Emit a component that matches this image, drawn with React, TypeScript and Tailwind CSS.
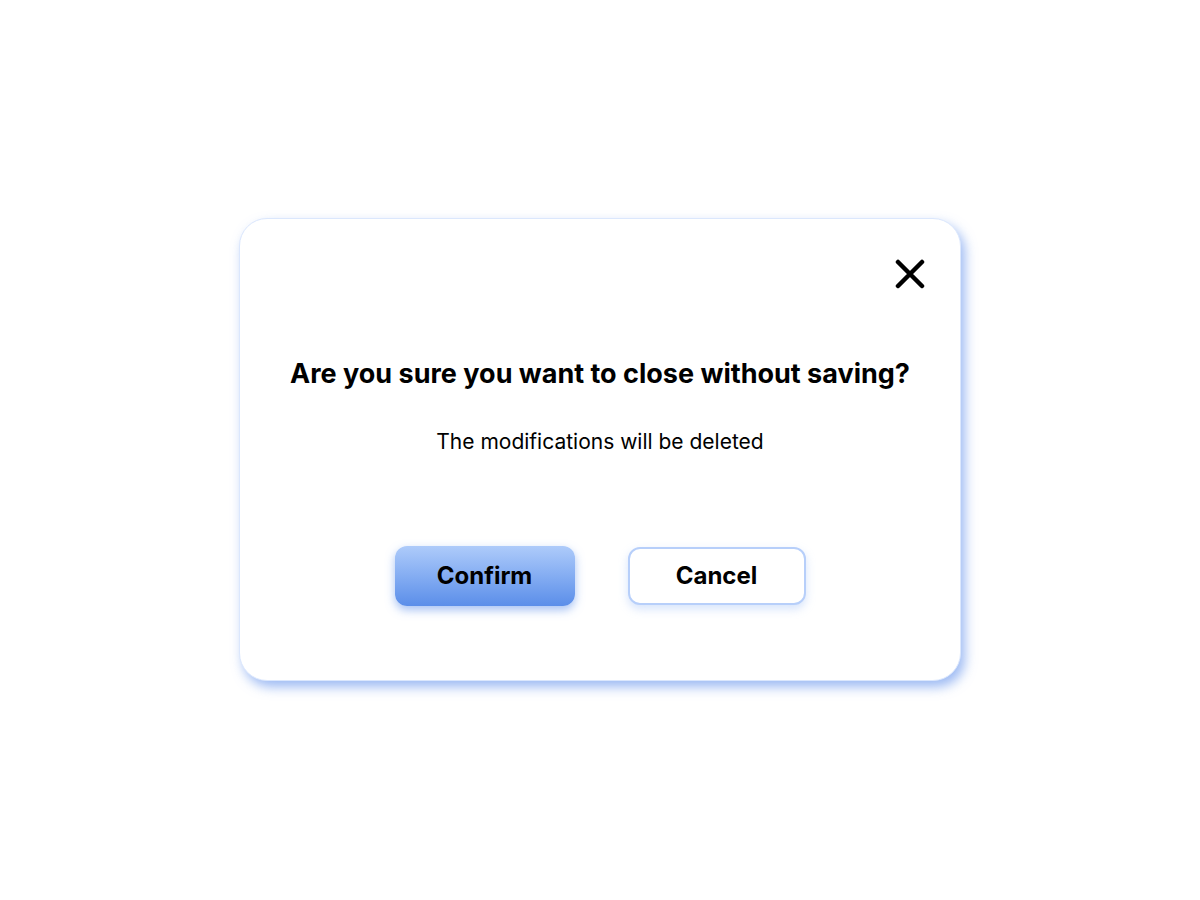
export default function App() {
  return (
    <div className="w-[1200px] h-[900px] bg-white flex items-center justify-center font-['Inter',sans-serif]">
      <div className="w-[722px] h-[463px] mt-[-1px] ml-[-1px] rounded-[28px] bg-white border border-[#dbe7fd] shadow-[4px_6px_12px_rgba(92,140,235,0.6)] flex flex-col pl-9 pr-[35px] pt-10">
        {/* Close */}
        <div className="flex justify-end">
          <button className="text-black">
            <svg width="30" height="30" viewBox="0 0 30 30" fill="none" stroke="currentColor" strokeWidth="4.5" strokeLinecap="round">
              <path d="M3 3 27 27M27 3 3 27" />
            </svg>
          </button>
        </div>

        <h1 className="mt-[69px] text-center text-[27px] font-bold text-black leading-8">
          Are you sure you want to close without saving?
        </h1>
        <p className="mt-[39px] text-center text-[21px] text-black leading-[26px]">
          The modifications will be deleted
        </p>

        {/* Actions */}
        <div className="mt-[91px] flex justify-center gap-[53px]">
          <button className="w-[180px] h-[60px] rounded-[12px] bg-gradient-to-b from-[#aecbfa] to-[#5b8ee9] shadow-[0_4px_10px_rgba(91,142,233,0.55)] text-[24px] font-bold text-black">
            Confirm
          </button>
          <button className="w-[178px] h-[58px] mt-px rounded-[12px] bg-white border-2 border-[#b7cffa] shadow-[0_4px_10px_rgba(150,185,245,0.4)] text-[24px] font-bold text-black">
            Cancel
          </button>
        </div>
      </div>
    </div>
  );
}
